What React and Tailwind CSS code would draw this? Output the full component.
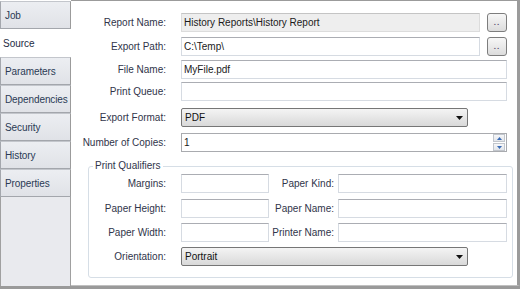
import React from 'react';

const tabs = ['Job', 'Source', 'Parameters', 'Dependencies', 'Security', 'History', 'Properties'];

const TextBox = ({ value, readOnly, className = 'flex-1' }) => (
  <div
    className={`${className} h-[19px] border border-[#d6dbe2] border-t-[#abadb3] px-[2px] flex items-center text-[#1a1a1a] ${
      readOnly ? 'bg-[#eeeeee] border-[#dcdcdc] border-t-[#c4c4c4]' : 'bg-white'
    }`}
  >
    {value}
  </div>
);

const DotsButton = () => (
  <div className="ml-[7px] w-[20px] h-[19px] rounded-[3px] border border-[#7d7d7d] bg-linear-to-b from-[#f7f7f7] to-[#dcdcdc] flex items-center justify-center">
    <span className="text-[8px] leading-none font-bold text-[#5a4b6e] tracking-[1px]">..</span>
  </div>
);

const Select = ({ value }) => (
  <div className="w-[287px] h-[19px] rounded-[2px] border border-[#767676] bg-linear-to-b from-[#f4f4f4] to-[#d9d9d9] flex items-center justify-between pl-[3px] pr-[4px] text-[#111]">
    <span>{value}</span>
    <svg width="7" height="4" viewBox="0 0 7 4">
      <path d="M0 0h7L3.5 4z" fill="#111" />
    </svg>
  </div>
);

const Row = ({ label, mt, children }) => (
  <div className={`flex items-center pr-[10px] ${mt}`}>
    <span className="w-[95px] text-right">{label}</span>
    <div className="ml-[15px] flex-1 flex items-center">{children}</div>
  </div>
);

const QRow = ({ label, mt, children }) => (
  <div className={`flex items-center pr-[5px] ${mt}`}>
    <span className="w-[77px] text-right">{label}</span>
    <div className="ml-[15px] flex-1 flex items-center">{children}</div>
  </div>
);

const Spinner = () => (
  <div className="flex flex-col gap-[1px]">
    <div className="w-[12px] h-[8px] border border-[#c2c6cc] bg-linear-to-b from-[#f6f7f9] to-[#e2e5ea] flex items-center justify-center">
      <svg width="5" height="3" viewBox="0 0 5 3"><path d="M0 3h5L2.5 0z" fill="#3a6bb5" /></svg>
    </div>
    <div className="w-[12px] h-[8px] border border-[#c2c6cc] bg-linear-to-b from-[#f6f7f9] to-[#e2e5ea] flex items-center justify-center">
      <svg width="5" height="3" viewBox="0 0 5 3"><path d="M0 0h5L2.5 3z" fill="#3a6bb5" /></svg>
    </div>
  </div>
);

export default function App() {
  return (
    <div className="w-[520px] h-[289px] bg-white flex border-b-[3px] border-[#9a9a9a] font-['Liberation_Sans',Arial,sans-serif] text-[10px] text-[#30354a]">
      {/* tab strip */}
      <div className="w-[71px] flex flex-col pt-[1px] bg-white">
        {tabs.map((t) =>
          t === 'Source' ? (
            <div key={t} className="h-[28px] bg-white pl-[3px] flex items-center text-[#1e2d44]">
              {t}
            </div>
          ) : (
            <div
              key={t}
              className="h-[28px] border border-[#c3c6cc] border-l-[#a4a7ad] border-b-[#a3a6ac] border-r-[#9b9b9b] bg-linear-to-b from-[#eceef2] to-[#e0e2e7] pl-[4px] flex items-center text-[#2a3a55] tracking-[-0.1px]"
            >
              {t}
            </div>
          )
        )}
        <div className="flex-1 bg-[#e9eaee] border-l border-r border-[#a0a0a0]" />
      </div>

      {/* source page */}
      <div className="flex-1 flex flex-col border-t border-b border-r-[3px] border-t-[#9b9b9b] border-b-[#c0c0c0] border-r-[#9b9b9b]">
        <Row label="Report Name:" mt="mt-[12px]">
          <TextBox value="History Reports\History Report" readOnly />
          <DotsButton />
        </Row>
        <Row label="Export Path:" mt="mt-[5px]">
          <TextBox value="C:\Temp\" />
          <DotsButton />
        </Row>
        <Row label="File Name:" mt="mt-[4px]">
          <TextBox value="MyFile.pdf" />
        </Row>
        <Row label="Print Queue:" mt="mt-[3px]">
          <TextBox value="" />
        </Row>
        <Row label="Export Format:" mt="mt-[7px]">
          <Select value="PDF" />
        </Row>
        <Row label="Number of Copies:" mt="mt-[6px]">
          <div className="flex-1 h-[19px] border border-[#a9abaf] bg-white pl-[2px] pr-[1px] flex items-center justify-between text-[#1a1a1a]">
            <span>1</span>
            <Spinner />
          </div>
        </Row>

        <fieldset className="ml-[17px] mr-[4px] mt-[8px] border border-[#d6dee6] rounded-[3px] pb-[11px]">
          <legend className="ml-[4px] px-[2px] leading-[12px] text-[#30354a]">Print Qualifiers</legend>
          <QRow label="Margins:" mt="mt-[2px]">
            <TextBox value="" className="w-[88px]" />
            <span className="w-[65px] text-right">Paper Kind:</span>
            <div className="ml-[4px] flex-1 flex">
              <TextBox value="" />
            </div>
          </QRow>
          <QRow label="Paper Height:" mt="mt-[6px]">
            <TextBox value="" className="w-[88px]" />
            <span className="w-[65px] text-right">Paper Name:</span>
            <div className="ml-[4px] flex-1 flex">
              <TextBox value="" />
            </div>
          </QRow>
          <QRow label="Paper Width:" mt="mt-[5px]">
            <TextBox value="" className="w-[88px]" />
            <span className="w-[65px] text-right">Printer Name:</span>
            <div className="ml-[4px] flex-1 flex">
              <TextBox value="" />
            </div>
          </QRow>
          <QRow label="Orientation:" mt="mt-[5px]">
            <Select value="Portrait" />
          </QRow>
        </fieldset>
      </div>
    </div>
  );
}
